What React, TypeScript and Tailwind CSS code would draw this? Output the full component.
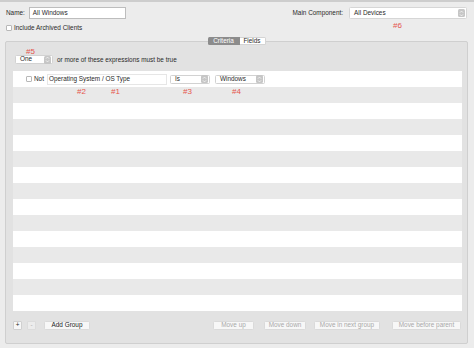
import React from "react";

const ROWS = Array.from({ length: 15 }, (_, i) => i);

function Stepper() {
  return (
    <span className="flex h-[8px] w-[7px] shrink-0 items-center justify-center rounded-[1.5px] bg-[#c6c6c6]">
      <svg width="5" height="7" viewBox="0 0 5 7">
        <path d="M1 2.6 L2.5 1.1 L4 2.6" fill="none" stroke="#f4f4f4" strokeWidth="0.9" />
        <path d="M1 4.4 L2.5 5.9 L4 4.4" fill="none" stroke="#f4f4f4" strokeWidth="0.9" />
      </svg>
    </span>
  );
}

function Select({ label, width, height = 9 }: { label: string; width: number; height?: number }) {
  return (
    <div
      className="flex items-center justify-between rounded-[1.5px] border border-[#d2d2d2] bg-white pl-[4px] pr-[1px]"
      style={{ width, height }}
    >
      <span className="leading-none">{label}</span>
      <Stepper />
    </div>
  );
}

function Checkbox() {
  return <span className="block h-[6px] w-[6px] shrink-0 rounded-[1px] border border-[#b8b8b8] bg-white" />;
}

function Btn({ label, width, disabled }: { label: string; width: number; disabled?: boolean }) {
  return (
    <div
      className={
        "flex h-[9px] items-center justify-center rounded-[1.5px] border border-[#dadada] bg-[#f7f7f7] leading-none " +
        (disabled ? "text-[#a9a9a9]" : "text-[#222]")
      }
      style={{ width }}
    >
      {label}
    </div>
  );
}

function Note({ n, x, y }: { n: string; x: number; y: number }) {
  return (
    <span
      className="absolute text-[8px] leading-none text-[#e5564d]"
      style={{ left: x, top: y }}
    >
      {n}
    </span>
  );
}

export default function App() {
  return (
    <div
      className="relative h-[348px] w-[474px] overflow-hidden border-t-2 border-[#cdcdcd] bg-[#ececec] text-[6.4px] text-[#2a2a2a]"
      style={{ fontFamily: '"Liberation Sans", Arial, sans-serif' }}
    >
      {/* top row */}
      <div className="mt-[5px] flex h-[12px] items-center pl-[6px] pr-[7px]">
        <span className="mr-[4px]">Name:</span>
        <div className="flex h-[12px] w-[97px] items-center border border-[#bdbdbd] bg-white pl-[3px]">
          All Windows
        </div>
        <div className="flex-1" />
        <span className="mr-[6px]">Main Component:</span>
        <div className="flex h-[12px] w-[118px] items-center justify-between rounded-[1.5px] border border-[#d6d6d6] bg-white pl-[4px] pr-[1px]">
          <span>All Devices</span>
          <Stepper />
        </div>
      </div>

      <div className="mt-[4px] flex h-[10px] items-center gap-[2px] pl-[6px]">
        <Checkbox />
        <span>Include Archived Clients</span>
      </div>

      {/* tabs */}
      <div className="relative z-10 mt-[4px] -mb-[4px] flex h-[8px] justify-center pr-[1px]">
        <div className="flex w-[32px] items-center justify-center rounded-l-[1.5px] bg-[#8c8c8c] leading-none text-white">
          Criteria
        </div>
        <div className="flex w-[26px] items-center justify-center rounded-r-[1.5px] border border-l-0 border-[#d4d4d4] bg-white leading-none">
          Fields
        </div>
      </div>

      {/* panel */}
      <div className="ml-[5px] h-[303px] w-[463px] rounded-[2px] border border-[#cfcfcf] bg-[#e2e2e2]">
        <div className="mt-[13px] flex h-[9px] items-center gap-[4px] pl-[9px]">
          <Select label="One" width={38} />
          <span>or more of these expressions must be true</span>
        </div>

        <div className="mt-[7px] ml-[7px] w-[449px]">
          {ROWS.map((i) => (
            <div
              key={i}
              className={"flex h-[16px] items-center " + (i % 2 === 0 ? "bg-white" : "bg-[#e9e9e9]")}
            >
              {i === 0 && (
                <>
                  <span className="ml-[13px]">
                    <Checkbox />
                  </span>
                  <span className="ml-[2px]">Not</span>
                  <div className="ml-[3px] flex h-[11px] w-[120px] items-center border border-[#e6e6e6] bg-white pl-[1px]">
                    Operating System / OS Type
                  </div>
                  <div className="ml-[3px]">
                    <Select label="Is" width={40} />
                  </div>
                  <div className="ml-[5px]">
                    <Select label="Windows" width={50} />
                  </div>
                </>
              )}
            </div>
          ))}
        </div>

        <div className="mt-[10px] flex items-center pl-[7px] pr-[6px]">
          <div className="flex h-[9px] w-[9px] items-center justify-center rounded-[1px] border border-[#d0d0d0] bg-[#f7f7f7] leading-none">
            +
          </div>
          <div className="ml-[5px] flex h-[9px] w-[9px] items-center justify-center rounded-[1px] border border-[#dcdcdc] bg-[#ececec] leading-none text-[#b5b5b5]">
            -
          </div>
          <div className="ml-[8px]">
            <Btn label="Add Group" width={46} />
          </div>
          <div className="flex-1" />
          <Btn label="Move up" width={41} disabled />
          <div className="ml-[10px]">
            <Btn label="Move down" width={42} disabled />
          </div>
          <div className="ml-[8px]">
            <Btn label="Move in next group" width={66} disabled />
          </div>
          <div className="ml-[12px]">
            <Btn label="Move before parent" width={69} disabled />
          </div>
        </div>
      </div>

      <Note n="#6" x={393} y={20} />
      <Note n="#5" x={26} y={46} />
      <Note n="#2" x={77} y={86} />
      <Note n="#1" x={111} y={86} />
      <Note n="#3" x={183} y={86} />
      <Note n="#4" x={232} y={86} />
    </div>
  );
}
